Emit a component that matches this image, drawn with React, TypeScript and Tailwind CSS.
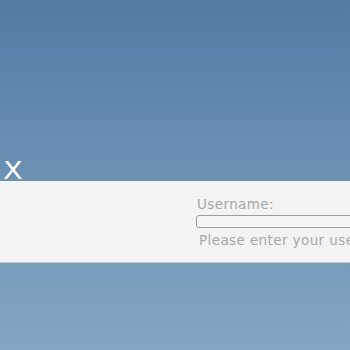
import React from "react";

export default function App() {
  return (
    <div
      className="h-[350px] w-[350px] overflow-hidden flex flex-col bg-gradient-to-b from-[#537ca5] to-[#84a6c5]"
      style={{ fontFamily: '"DejaVu Sans", sans-serif' }}
    >
      {/* Title strip */}
      <div className="h-[181px] flex items-end pl-[3px]">
        <span className="text-white text-[24px] leading-[20px] inline-block origin-left scale-x-[1.2]">X</span>
      </div>

      {/* Login panel */}
      <div className="h-[82px] bg-[#f3f3f3] border-b border-[#c9c9c9] flex">
        <div className="w-[196px] shrink-0" />
        <div className="flex-1 flex flex-col pt-[15px] overflow-hidden tracking-[0.4px]">
          <label className="text-[13.5px] leading-4 text-[#a8a8a8] pl-[1px]">Username:</label>
          <input
            className="mt-[3px] h-[13px] w-[170px] shrink-0 rounded-[3px] border border-[#9c9c9c] bg-[#f5f5f5] outline-none"
          />
          <div className="mt-[4px] pl-[3px] text-[13.5px] leading-4 text-[#a8a8a8] whitespace-nowrap">
            Please enter your username
          </div>
        </div>
      </div>
    </div>
  );
}
